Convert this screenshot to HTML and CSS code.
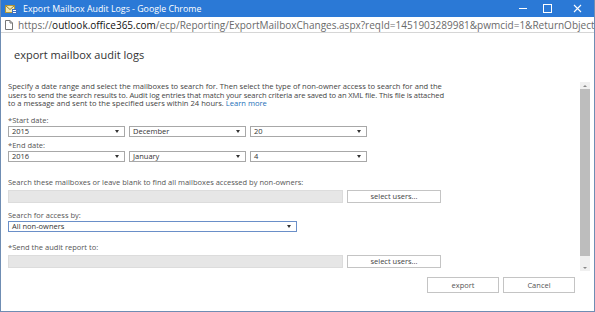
FILE: index.html
```html
<!DOCTYPE html>
<html>
<head>
<meta charset="utf-8">
<link rel="stylesheet" href="styles.css">
</head>
<body>
<div class="window">
  <div class="titlebar">
    <svg class="appicon" width="12" height="10" viewBox="0 0 12 10">
      <rect x="0.5" y="1.5" width="9" height="7" fill="#f3e7b0" stroke="#b59a3a" stroke-width="1"/>
      <path d="M0.5 1.5 L5 5.5 L9.5 1.5" fill="none" stroke="#8a7a3a" stroke-width="1"/>
      <rect x="7" y="5" width="5" height="5" fill="#3a6fc4"/>
      <rect x="8" y="6" width="3" height="1" fill="#fff"/>
      <rect x="8" y="8" width="3" height="1" fill="#fff"/>
    </svg>
    <span class="title">Export Mailbox Audit Logs - Google Chrome</span>
    <div class="controls">
      <span class="ctl min"></span>
      <span class="ctl max"></span>
      <span class="ctl close">
        <svg width="9" height="9" viewBox="0 0 9 9"><path d="M1 1 L8 8 M8 1 L1 8" stroke="#fff" stroke-width="1.1"/></svg>
      </span>
    </div>
  </div>
  <div class="addressbar">
    <svg class="pageicon" width="8" height="10" viewBox="0 0 8 10">
      <path d="M0.5 0.5 H5 L7.5 3 V9.5 H0.5 Z" fill="#fff" stroke="#777" stroke-width="1"/>
      <path d="M5 0.5 V3 H7.5" fill="none" stroke="#777" stroke-width="1"/>
    </svg>
    <span class="url"><span class="dim">https://</span>outlook.office365.com<span class="dim">/ecp/Reporting/ExportMailboxChanges.aspx?reqId=1451903289981&amp;pwmcid=1&amp;ReturnObject</span></span>
  </div>
  <div class="content">
    <h1 class="heading">export mailbox audit logs</h1>
    <div class="body">
      <div class="form">
        <p class="intro">Specify a date range and select the mailboxes to search for. Then select the type of non-owner access to search for and the<br><span class="l2">users to send the search results to. Audit log entries that match your search criteria are saved to an XML file. This file is attached</span><br>to a message and sent to the specified users within 24 hours. <a class="link">Learn more</a></p>

        <div class="label first">*Start date:</div>
        <div class="daterow">
          <div class="select"><span class="val">2015</span><i class="arrow"></i></div>
          <div class="select"><span class="val">December</span><i class="arrow"></i></div>
          <div class="select"><span class="val">20</span><i class="arrow"></i></div>
        </div>
        <div class="label tight">*End date:</div>
        <div class="daterow">
          <div class="select"><span class="val">2016</span><i class="arrow"></i></div>
          <div class="select"><span class="val">January</span><i class="arrow"></i></div>
          <div class="select"><span class="val">4</span><i class="arrow"></i></div>
        </div>

        <div class="label section">Search these mailboxes or leave blank to find all mailboxes accessed by non-owners:</div>
        <div class="pickrow">
          <div class="picker"></div>
          <div class="btn wide">select users...</div>
        </div>

        <div class="label section2">Search for access by:</div>
        <div class="select access"><span class="val">All non-owners</span><i class="arrow"></i></div>

        <div class="label section3">*Send the audit report to:</div>
        <div class="pickrow">
          <div class="picker"></div>
          <div class="btn wide">select users...</div>
        </div>
      </div>
      <div class="scrollbar">
        <div class="sarrow up"></div>
        <div class="thumb"></div>
        <div class="sarrow down"></div>
      </div>
    </div>
    <div class="footer">
      <div class="btn action">export</div>
      <div class="btn action">Cancel</div>
    </div>
  </div>
</div>
</body>
</html>
```

FILE: styles.css
```css
* { box-sizing: border-box; }
html, body { margin: 0; padding: 0; }
body {
  width: 595px;
  height: 312px;
  overflow: hidden;
  font-family: "Open Sans", "Noto Sans", sans-serif;
  background: #fff;
}
.window {
  width: 595px;
  height: 312px;
  display: flex;
  flex-direction: column;
  border-left: 1px solid #6f8db3;
  border-right: 1px solid #6f8db3;
  border-bottom: 1px solid #6f8db3;
  background: #fff;
}
.titlebar {
  height: 17px;
  background: #2b79d6;
  display: flex;
  align-items: center;
  padding-left: 4px;
  color: #fff;
  flex: none;
}
.appicon { flex: none; margin-right: 6px; }
.title {
  font-size: 8.8px;
  white-space: nowrap;
}
.controls {
  margin-left: auto;
  display: flex;
  align-items: center;
  height: 17px;
}
.ctl {
  width: 25px;
  height: 17px;
  display: flex;
  align-items: center;
  justify-content: center;
}
.ctl.min::before {
  content: "";
  width: 8px;
  height: 1px;
  background: #fff;
}
.ctl.max::before {
  content: "";
  width: 7px;
  height: 7px;
  border: 1px solid #fff;
}
.ctl.close { width: 34px; }
.addressbar {
  height: 16px;
  flex: none;
  display: flex;
  align-items: center;
  padding-left: 4px;
  border-bottom: 1px solid #d6d6d6;
  white-space: nowrap;
  overflow: hidden;
}
.pageicon { flex: none; margin-right: 5px; }
.url {
  font-size: 10px;
  color: #111;
}
.url .dim { color: #6a6a6a; }
.content {
  flex: 1;
  display: flex;
  flex-direction: column;
  padding: 0 0 0 7px;
  color: #444;
}
.heading {
  margin: 14px 0 0 6px;
  font-size: 11px;
  font-weight: 400;
  color: #333;
  height: 16px;
  line-height: 16px;
}
.body {
  display: flex;
  margin-top: 19px;
  height: 189px;
  flex: none;
}
.form {
  flex: none;
  width: 460px;
  font-size: 7.5px;
  color: #444;
}
.intro {
  margin: 0;
  width: 460px;
  font-size: 7.6px;
  line-height: 8.6px;
}
.intro .l2 { letter-spacing: -0.12px; }
.link { color: #1e6fb8; }
.label {
  line-height: 9px;
  height: 9px;
  color: #555;
}
.label.first { margin-top: 8px; }
.label.tight { margin-top: 4px; }
.label.section { margin-top: 16px; }
.label.section2 { margin-top: 8px; }
.label.section3 { margin-top: 11px; }
.daterow {
  display: grid;
  grid-template-columns: 117px 117px 117px;
  column-gap: 4px;
  margin-top: 1px;
}
.select {
  width: 117px;
  height: 11px;
  border: 1px solid #a8a8a8;
  background: #fff;
  display: flex;
  align-items: center;
  padding: 0 5px 0 3px;
  color: #333;
  overflow: hidden;
}
.val { flex: 1; min-width: 0; white-space: nowrap; }
.arrow {
  flex: none;
  width: 0;
  height: 0;
  border-left: 2.5px solid transparent;
  border-right: 2.5px solid transparent;
  border-top: 3px solid #333;
}
.select.access {
  width: 289px;
  margin-top: 1px;
  border-color: #6a8fc8;
}
.pickrow {
  display: grid;
  grid-template-columns: 335px 94px;
  column-gap: 4px;
  margin-top: 3px;
}
.picker {
  height: 13px;
  background: #e6e6e6;
  border: 1px solid #dcdcdc;
}
.btn {
  height: 13px;
  border: 1px solid #c4c4c4;
  background: #fff;
  display: flex;
  align-items: center;
  justify-content: center;
  color: #444;
}
.btn.wide { font-size: 7.5px; }
.scrollbar {
  margin-left: auto;
  margin-right: 4px;
  width: 10px;
  flex: none;
  display: flex;
  flex-direction: column;
  height: 189px;
  background: #f0f0f0;
}
.sarrow {
  height: 7px;
  display: flex;
  align-items: center;
  justify-content: center;
  flex: none;
}
.sarrow.up::before {
  content: "";
  border-left: 2px solid transparent;
  border-right: 2px solid transparent;
  border-bottom: 2px solid #888;
}
.sarrow.down::before {
  content: "";
  border-left: 2px solid transparent;
  border-right: 2px solid transparent;
  border-top: 2px solid #888;
}
.thumb {
  flex: 1;
  background: #bdbdbd;
  margin: 0 0 8px 0;
}
.footer {
  display: flex;
  justify-content: flex-end;
  gap: 4px;
  padding-right: 19px;
  margin-top: 6px;
}
.btn.action {
  width: 72px;
  height: 16px;
  color: #555;
  font-size: 7.5px;
}
```
